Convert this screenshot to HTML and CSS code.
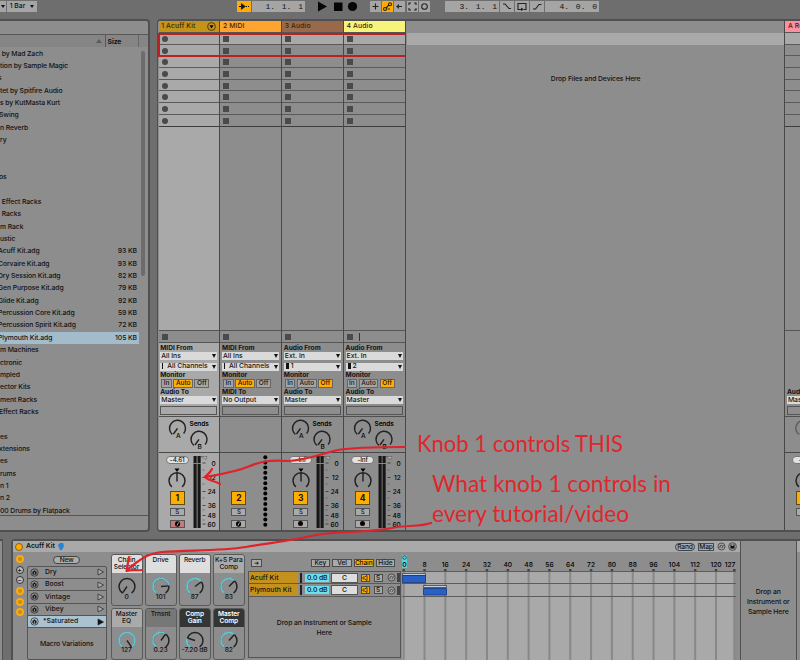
FILE: index.html
```
<!DOCTYPE html>
<html lang="en">
<head>
<meta charset="utf-8">
<title>Acuff Kit</title>
<link rel="stylesheet" href="styles.css">
</head>
<body>
<header class="bar">
  <div class="cell quant-prev"><i class="caret"></i></div>
  <div class="cell quant">1 Bar <i class="caret"></i></div>
  <div class="cell follow on"><svg width="14" height="11"><path d="M2 5.5h4M9 5.5h1M11 5.5h1" stroke="#111"/><path d="M4.500 3L8 5.500 4.500 8z" fill="#111"/></svg></div>
  <div class="cell pos">1.&nbsp; 1.&nbsp; 1</div>
  <svg class="transport" width="42" height="13"><path d="M1 1.500L10 6.500 1 11.500z"/><path d="M17 2.500h8.500v8.500h-8.500z"/><circle cx="35.500" cy="6.500" r="4.600"/></svg>
  <div class="tools">
    <div class="cell"><svg width="11" height="11"><path d="M2.500 5.500h6M5.500 2.500v6"/></svg></div>
    <div class="cell on"><svg width="11" height="11"><circle cx="3" cy="8" r="1.500"/><circle cx="8" cy="3.200" r="1.500"/><path d="M4 7L7 4M5.500 8h2.500"/></svg></div>
    <div class="cell"><svg width="11" height="11"><path d="M3 5.500h5M5 3.700L3 5.500l2 1.800"/></svg></div>
    <div class="cell"><svg width="11" height="11"><path d="M2 4V2h2M7 2h2v2M9 7v2H7M4 9H2V7"/></svg></div>
    <div class="cell"><svg width="11" height="11"><circle cx="5.500" cy="5.500" r="2.800"/></svg></div>
  </div>
  <div class="tools loop">
    <div class="cell num">3.&nbsp; 1.&nbsp; 1</div>
    <div class="cell w14"><svg width="14" height="11"><path d="M3 3h2l4 4.500h2"/></svg></div>
    <div class="cell w14"><svg width="14" height="11"><path d="M6 8.500H3v-6h8v6H9"/><path d="M6 6.500L9 8.500 6 10z" fill="#222" stroke="none"/></svg></div>
    <div class="cell w14"><svg width="14" height="11"><path d="M3 8h2.500L9 3.500h2.500"/></svg></div>
    <div class="cell num">4.&nbsp; 0.&nbsp; 0</div>
  </div>
</header>

<div class="upper">
  <aside class="browser">
    <div class="search"></div>
    <div class="cols"><span class="name"><i class="sort"></i></span><span class="size">Size</span></div>
    <div class="files"><div class="list" id="files"></div><div class="scroll"></div></div>
    <div class="foot"></div>
  </aside>
  <main class="session">
    <div class="tracks" id="tracks"></div>
    <div class="drop"><div class="hl"></div><p>Drop Files and Devices Here</p></div>
    <div class="return" id="return"></div>
    <div class="selection"></div>
  </main>
</div>

<footer class="lower">
  <div class="stub"></div>
  <section class="device">
    <div class="title"><i class="led"></i><b>Acuff Kit</b><svg width="8" height="9"><path d="M1 3l2-2 3 0 1 3-2 4H3z" fill="#2583d8"/></svg>
      <span class="pill rand">Rand</span><span class="btn map">Map</span>
      <svg width="9" height="9"><circle cx="4.500" cy="4.500" r="3.500" fill="#aaa" stroke="#333" stroke-width=".8"/><path d="M3 6V4l2-1M6 3v2L4.500 6" fill="none" stroke="#222" stroke-width=".8"/></svg>
      <svg width="9" height="9"><circle cx="4.500" cy="4.500" r="3.900" fill="#999" stroke="#444" stroke-width=".8"/><path d="M2.500 2.500h4v4h-4z" fill="#111"/><path d="M3.500 2.500h2v1.200h-2z" fill="#ddd"/></svg>
    </div>
    <div class="inner">
      <div class="side">
        <i class="o"></i><i class="g">+</i><i class="g">−</i><i class="o"></i><i class="o"></i><i class="o"></i>
      </div>
      <div class="vars">
        <span class="pill new">New</span>
        <div class="vlist"><div id="vars"></div><p>Macro Variations</p></div>
      </div>
      <div class="macros" id="macros"></div>
      <div class="chains">
        <div class="chead"><span class="btn go">➜</span><span class="btn">Key</span><span class="btn">Vel</span><span class="btn on">Chain</span><span class="btn">Hide</span></div>
        <div class="clist"><div id="chains"></div><p>Drop an Instrument or Sample<br>Here</p></div>
      </div>
      <svg class="zones" id="zones" width="336" height="108" viewBox="401 552 336 108"></svg>
    </div>
  </section>
  <div class="dropdev">Drop an<br>Instrument or<br>Sample Here</div>
  <div class="next"></div>
</footer>

<svg class="notes" width="800" height="660">
  <path d="M405 447C380 447 355 447 338 450C320 454 308 460 288 461C270 460 262 461 250 466C236 472 222 474 205 477"/>
  <path d="M212 469C210 473 207 475 205 477C209 481 215 481 220 484"/>
  <path d="M431 523C420 527 405 525 392 528C365 533 340 531 316 535C290 541 270 543 246 547C220 551 190 550 162 552C145 554 137 562 127 570"/>
  <path d="M129 557L126.500 571C132 569 137 571 142 570"/>
  <text x="417" y="452" textLength="206" lengthAdjust="spacingAndGlyphs">Knob 1 controls THIS</text>
  <text x="432" y="491.500" textLength="239" lengthAdjust="spacingAndGlyphs">What knob 1 controls in</text>
  <text x="432" y="522" textLength="197" lengthAdjust="spacingAndGlyphs">every tutorial/video</text>
</svg>
<script src="app.js"></script>
</body>
</html>
```
FILE: styles.css
```
* { box-sizing: border-box; }
body { margin: 0; width: 800px; height: 660px; overflow: hidden; position: relative; background: #6e6e6e; color: #121212; font: 550 6.850px/1 Inter, "Open Sans", sans-serif; letter-spacing: -.1px; }
p { margin: 0; }
svg { display: block; flex: none; }
i { font-style: normal; }

/* control bar */
.bar { height: 19px; padding-top: 1px; display: flex; }
.cell { height: 11px; background: #a5a5a5; display: flex; align-items: center; justify-content: center; flex: none; }
.cell svg { fill: none; stroke: #222; stroke-width: 1.100; }
.on { background: #ffad00 !important; }
.caret { border: 2.500px solid transparent; border-top: 4px solid #111; border-bottom: 0; }
.cell .caret { border-width: 3px 2px 0; }
.quant-prev { width: 6px; }
.quant { width: 30px; margin-left: 1px; gap: 5px; letter-spacing: 0; }
.follow { width: 14px; margin-left: 200px; }
.pos { width: 53px; margin-left: 1px; justify-content: flex-end; padding-right: 2px; }
.pos, .num { font-family: "Liberation Mono", monospace; font-size: 8px; font-weight: 400; letter-spacing: 0; word-spacing: -1.400px; }
.transport { margin: -1px 0 0 12px; fill: #050505; }
.tools { display: flex; gap: 1.400px; margin-left: 10.500px; }
.tools .cell { width: 11px; }
.tools.loop { margin-left: 15px; gap: 1px; }
.tools .num { width: 54px; justify-content: flex-end; padding-right: 2px; }
.tools .w14 { width: 14px; }

/* browser */
.upper { display: flex; height: 513px; }
.browser { width: 150px; background: #8d8d8d; border: 2px solid #505050; border-left: 0; border-radius: 0 4px 4px 0; display: flex; flex-direction: column; }
.search { height: 14px; border-bottom: 1px solid #585858; }
.cols { height: 12px; background: #858585; display: flex; }
.cols .name { width: 106px; border-right: 1px solid #5a5a5a; display: flex; justify-content: flex-end; align-items: center; padding-right: 3px; }
.sort { border: 3px solid transparent; border-bottom: 4px solid #5c5c5c; border-top: 0; }
.cols .size { width: 33px; padding: 4px 0 0 1.500px; border-right: 1px solid #666; font-weight: 650; }
.files { height: 469px; display: flex; border-bottom: 1px solid #555; overflow: hidden; }
.list { width: 139px; overflow: hidden; padding-top: .800px; }
.row { height: 12.370px; display: flex; justify-content: space-between; align-items: center; padding-right: 2px; white-space: pre; }
.row.sel { background: #a3bccb; }
.scroll { width: 4px; height: 225px; margin: 4px 0 0 2px; border-radius: 2px; background: #6c6c6c; }

/* session */
.session { position: relative; width: 643px; margin-left: 7px; border: 2px solid #505050; border-right: 0; border-left-width: 1px; border-radius: 4px 0 0 4px; background: #8d8d8d; display: flex; overflow: hidden; padding-left: .700px; }
.tracks { display: flex; flex: none; }
.track { width: 61.800px; border-right: 1px solid #484848; flex: none; overflow: hidden; }
.track.active { background: #a9a9a9; }
.thead { height: 12px; padding: 0 3px 0 2.500px; display: flex; align-items: center; justify-content: space-between; border-bottom: 1px solid #555; white-space: nowrap; color: #3a2608; letter-spacing: .1px; }
.slot { height: 11.700px; border-bottom: 1px solid #5a5a5a; padding: 3px; }
.slot:nth-child(2) { background: #a9a9a9; }
.slot:nth-child(9) { border-bottom-color: #3d3d3d; }
.slot i { display: block; width: 6px; height: 6px; background: #4a4a4a; }
.active .slot i { border-radius: 50%; }
.space { height: 203.700px; }
.stop { height: 12.500px; border: 1px solid #555; border-width: 1px 0; background: #8d8d8d; padding: 2.500px 3px; display: flex; gap: 6px; }
.stop i { width: 6px; height: 6px; background: #4a4a4a; }
.stop b { width: 1px; height: 8px; margin-top: -1px; background: #333; }
.io { height: 74px; border-bottom: 1px solid #505050; padding: 1px 2px 0 1.500px; display: flex; flex-direction: column; }
.io label { height: 8.500px; line-height: 8px; font-weight: 680; font-size: 6.600px; white-space: nowrap; flex: none; letter-spacing: 0; }
.select { height: 8px; background: #dadada; margin-bottom: 2.500px; padding: 0 1px; display: flex; align-items: center; justify-content: space-between; font-size: 6.800px; white-space: nowrap; overflow: hidden; flex: none; letter-spacing: 0; }
.select span i { display: inline-block; height: 6px; width: 1px; background: #111; margin: 0 4px 0 1px; vertical-align: -1px; }
.select span i.wide { width: 3px; margin-right: 2px; }
.select + label { margin-top: -2px; }
.mon { display: flex; gap: 1.500px; height: 9px; margin: -.500px 0 0 1px; flex: none; }
.mon span { border: 1px solid #666; background: #a4a4a4; padding: 0 1.500px; font-size: 6.500px; line-height: 7.500px; letter-spacing: 0; }
.mon + label { margin-bottom: -.500px; }
.box { height: 9px; border: 1px solid #555; flex: none; margin-top: -.500px; }
.sends { height: 36px; border-bottom: 1px solid #484848; }
.sends text { font-size: 6.500px; }
.k { fill: none; stroke: #222; stroke-width: 1.450; }
.mixer { height: 77px; display: flex; }
.strip { width: 34px; padding: 3px 0 0 3px; display: flex; flex-direction: column; align-items: center; }
.gain { width: 23px; height: 8px; border: 1px solid #777; border-radius: 4px; background: #e2e2e2; text-align: center; font-size: 6.300px; line-height: 6.500px; }
.pan { height: 27.500px; }
.act { width: 15px; height: 14px; border: 1px solid #5d4a18; background: #ffad00; text-align: center; font: 700 8.500px/12.500px Inter, sans-serif; }
.mini { width: 15px; height: 8px; border: 1px solid #555; background: #aaa; text-align: center; font-size: 6px; line-height: 6.500px; margin-top: 3.300px; display: flex; justify-content: center; align-items: center; flex: none; }
.mini.arm { background: #c67a7a; }
.mini i { width: 5px; height: 5px; border-radius: 50%; background: #050505; }
.midi .strip { padding-top: 38.500px; }
.meter text { font-size: 6.500px; text-anchor: end; letter-spacing: 0; }
.drop { width: 379.500px; flex: none; border-right: 1px solid #484848; text-align: center; padding-left: 1px; }
.hl { margin-top: 12px; height: 11.500px; background: #a9a9a9; }
.drop p { margin-top: 31.500px; }
.return { width: 20px; flex: none; overflow: hidden; }
.return .track { border: 0; width: 61px; }
.selection { position: absolute; z-index: 2; left: 0; top: 12px; width: 247px; height: 24px; border: 2px solid #b92222; border-right: 0; }

/* device area */
.lower { display: flex; height: 121px; margin-top: 7px; align-items: stretch; }
.stub { width: 3px; background: #8d8d8d; border: 2px solid #505050; border-width: 2px 1px 0 0; margin-right: 8px; }
.device { width: 730px; border: 2px solid #505050; border-width: 2px 1px 0 2px; border-radius: 4px 0 0 0; background: #8d8d8d; display: flex; flex-direction: column; flex: none; }
.title { height: 11px; background: #a9a9a9; display: flex; align-items: center; padding: 0 3px 0 2px; }
.title b { font-weight: 600; margin: 0 2px 0 3px; letter-spacing: 0; }
.led { width: 8px; height: 8px; border-radius: 50%; background: #ffad00; border: 1px solid #85610f; }
.pill { border: 1px solid #444; border-radius: 5px; background: #acacac; height: 8px; line-height: 6.500px; text-align: center; font-size: 6.600px; }
.rand { width: 20px; margin-left: auto; }
.btn { border: 1px solid #4c4c4c; background: #aaa; height: 8px; line-height: 6.500px; text-align: center; font-size: 6.600px; }
.map { width: 16px; margin: 0 3px; }
.title svg:last-child { margin-left: 2px; }
.inner { display: flex; height: 108px; }
.side { width: 14px; padding: 3px 0 0 2.500px; display: flex; flex-direction: column; gap: 2.700px; }
.side i { width: 8px; height: 8px; border-radius: 50%; text-align: center; line-height: 6px; flex: none; }
.side .o { background: #c98a17; border: 2px solid #fbac0c; }
.side .g { background: #bbb; border: 1px solid #333; }
.vars { width: 79.500px; display: flex; flex-direction: column; align-items: center; padding-top: 3.500px; }
.new { width: 27px; }
.vlist { width: 79.500px; height: 94px; margin-top: 2px; border: 1px solid #555; border-radius: 2px; letter-spacing: 0; }
.var { height: 12.400px; border-bottom: 1px solid #555; display: flex; align-items: center; padding: 0 2px; gap: 6px; }
.var:last-child { background: #abc3d1; gap: 4px; }
.var svg:last-child { margin-left: auto; }
.vlist p { text-align: center; margin-top: 13px; letter-spacing: -.1px; }
.macros { width: 141px; padding: 2px 0 0 4px; display: grid; grid-template-columns: repeat(4, 32px); grid-auto-rows: 52px; gap: 1.500px 2.100px; flex: none; }
.macro { border: 1px solid #5a5a5a; border-radius: 3px; overflow: hidden; text-align: center; }
.macro h4 { margin: 0; height: 18px; font-weight: 550; font-size: 6.600px; line-height: 7.200px; padding-top: 2px; white-space: nowrap; }
.macro svg { margin: 4px auto 0; }
.macro div { margin: -.500px -4px 0; white-space: nowrap; font-size: 6.700px; }
.white h4 { background: #dedede; }
.light h4 { background: #aaa; }
.gray h4 { background: #777; }
.dark h4 { background: #353535; color: #fff; font-weight: 600; }
.chains { width: 153.500px; flex: none; }
.chead { height: 19px; padding: 7px 0 0 3px; display: flex; gap: 2px; }
.chead .btn { width: 19.700px; }
.chead .go { width: 11px; margin-right: 47px; font-size: 6px; }
.clist { height: 87px; border: 1px solid #555; }
.chain { height: 12.400px; border-bottom: 1px solid #5a5a5a; display: flex; align-items: center; }
.chain b { width: 50px; height: 11.400px; line-height: 11.400px; padding-left: 1.500px; background: #c4921c; font-weight: 550; letter-spacing: 0; }
.chain u { width: 2px; height: 10px; background: #222; margin: 0 2.800px 0 2.300px; }
.db { width: 24.500px; height: 8px; background: #69e1ee; line-height: 8px; text-align: center; }
.note { width: 24.500px; height: 8px; background: #ddd; line-height: 8px; text-align: center; margin: 0 4px 0 3px; outline: .5px solid #555; }
.chain .btn { width: 9px; margin-right: 4px; padding: 0; }
.chain em { width: 3.500px; height: 9px; background: #444; margin-left: 1px; }
.clist p { text-align: center; line-height: 10px; margin-top: 21px; }
.zones text { font-size: 6.700px; text-anchor: middle; letter-spacing: 0; }
.dropdev { width: 55.500px; flex: none; border: 0 solid #505050; border-width: 2px 1px 0 0; background: #8d8d8d; text-align: center; line-height: 9.900px; padding-top: 46px; }
.next { flex: 1; border-top: 2px solid #505050; background: linear-gradient(#a9a9a9 11px, #8d8d8d 11px); }

/* annotations */
.notes { position: absolute; left: 0; top: 0; z-index: 3; }
.notes path { fill: none; stroke: #e0222a; stroke-width: 2.200; stroke-linecap: round; stroke-linejoin: round; }
.notes text { fill: #e0262c; font: 400 23px Lato, sans-serif; letter-spacing: 0; }
```
FILE: app.js
```
const $ = id => document.getElementById(id);

const files = [' by Mad Zach', 'tion by Sample Magic', 's', 'tet by Spitfire Audio', 's by KutMasta Kurt', 'Swing', 'n Reverb', 'ry', '', '', 'os', '',
  ' Effect Racks', ' Racks', 'm Rack', 'ustic', ['Acuff Kit.adg', 93], ['Corvaire Kit.adg', 93], ['Dry Session Kit.adg', 82],
  ['Gen Purpose Kit.adg', 79], ['Glide Kit.adg', 92], ['Percussion Core Kit.adg', 59], ['Percussion Spirit Kit.adg', 72], ['Plymouth Kit.adg', 105],
  'm Machines', 'ctronic', 'mpled', 'ector Kits', 'ment Racks', 'Effect Racks', '', 'es', 'xtensions', 'es', 'rums', 'n 1', 'n 2', '00 Drums by Flatpack'];
const shift = { 2: -2, 5: -1, 10: -1, 16: -2, 17: -2, 18: -2, 19: -2, 20: -2, 21: -2, 22: -2, 23: -2, 29: -1, 32: -1 };
$('files').innerHTML = files.map((f, i) => {
  const [name, kb] = Array.isArray(f) ? f : [f];
  return `<div class="row${kb === 105 ? ' sel' : ''}"><span style="margin-left:${shift[i] || 0}px">${name}</span><span>${kb ? kb + ' KB' : ''}</span></div>`;
}).join('');

const point = (cx, cy, r, deg) => {
  const a = (deg - 90) * Math.PI / 180;
  return `${(cx + r * Math.cos(a)).toFixed(2)} ${(cy + r * Math.sin(a)).toFixed(2)}`;
};
const arc = (cx, cy, r, from, to) => `M${point(cx, cy, r, from)}A${r} ${r} 0 ${to - from > 180 ? 1 : 0} 1 ${point(cx, cy, r, to)}`;

const sendKnob = (x, y, letter) => `<path class="k" d="${arc(x, y, 8, -140, 130)}M${x} ${y}L${point(x, y, 7, -145)}"/><text x="${x - 1.5}" y="${y + 9.5}">${letter}</text>`;
const sends = `<svg width="60" height="35">${sendKnob(18.5, 11.3, 'A')}${sendKnob(40, 22.3, 'B')}<text x="30.500" y="9.300" font-weight="600">Sends</text></svg>`;
const pan = `<svg class="pan" width="22" height="27.500"><path class="k" d="${arc(11, 16.7, 8, -140, 140)}M11 9.500v8"/><path d="M8.500 4.500h5L11 8z"/></svg>`;
const scale = [[0, 10], [12, 24.5], [24, 38.5], [36, 52.5], [48, 62.5], [60, 71]];
const meter = `<svg class="meter" width="26" height="77"><path d="M.5 3h3.200v72h-3.200zM4.500 3h3.200v72h-3.200z" fill="#171717"/><path d="M0 10.500h8" stroke="#888"/><path d="M8 3.500h6l-1 3z" fill="#bbb" stroke="#444" stroke-width=".5"/>${
  scale.map(([n, y]) => `<path d="M9.500 ${y}h3" stroke="#333" stroke-width=".8"/><text x="22.800" y="${y + 2.5}">${n}</text>`).join('')}${
  [17, 31, 45, 57, 67].map(y => `<path d="M9.500 ${y}h2" stroke="#444" stroke-width=".6"/>`).join('')}</svg>`;
const dots = `<svg width="25" height="77">${Array.from({ length: 14 }, (_, i) => `<circle cx="11.300" cy="${4.2 + i * 5.2}" r="2"/>`).join('')}</svg>`;
const select = (v, mark) => `<div class="select"><span>${mark ? `<i class="${mark}"></i>` : ''}${v}</span><i class="caret"></i></div>`;

const tracks = [
  { n: 1, name: 'Acuff Kit', color: '#c4931c', kind: 'MIDI', src: 'All Ins', ch: 'All Channels', mark: 'thin', mon: 'Auto', to: 'Audio To', out: 'Master', gain: '-4.61' },
  { n: 2, name: 'MIDI', color: '#ffa52f', kind: 'MIDI', src: 'All Ins', ch: 'All Channels', mark: 'thin', mon: 'Auto', to: 'MIDI To', out: 'No Output' },
  { n: 3, name: 'Audio', color: '#98694a', kind: 'Audio', src: 'Ext. In', ch: '1', mark: 'wide', mon: 'Off', to: 'Audio To', out: 'Master', gain: '-Inf' },
  { n: 4, name: 'Audio', color: '#f7f47c', kind: 'Audio', src: 'Ext. In', ch: '2', mark: 'wide', mon: 'Off', to: 'Audio To', out: 'Master', gain: '-Inf' }
];
const note = '<svg width="7" height="6"><ellipse cx="3.500" cy="3" rx="2.500" ry="2.800"/><path d="M3 4.500L4.500 1.500" stroke="#ddd" stroke-width=".8"/></svg>';
$('tracks').innerHTML = tracks.map(t => `
<div class="track${t.n === 1 ? ' active' : ''}${t.gain ? '' : ' midi'}">
  <div class="thead" style="background:${t.color}"><span>${t.n} ${t.name}</span>${t.n === 1 ? '<svg width="9" height="9"><circle cx="4.500" cy="4.500" r="3.900" fill="none" stroke="#3a2608" stroke-width=".8"/><path d="M2.500 3.200h4L4.500 6.500z"/></svg>' : ''}</div>
  ${'<div class="slot"><i></i></div>'.repeat(8)}
  <div class="space"></div>
  <div class="stop"><i></i>${t.n === 4 ? '<b></b>' : ''}</div>
  <div class="io"><label>${t.kind} From</label>${select(t.src)}${select(t.ch, t.mark)}
    <label>Monitor</label><div class="mon">${['In', 'Auto', 'Off'].map(m => `<span${m === t.mon ? ' class="on"' : ''}>${m}</span>`).join('')}</div>
    <label>${t.to}</label>${select(t.out)}<div class="box"></div></div>
  <div class="sends">${t.gain ? sends : ''}</div>
  <div class="mixer"><div class="strip">${t.gain ? `<div class="gain">${t.gain}</div>${pan}` : ''}
    <div class="act">${t.n}</div><div class="mini">S</div><div class="mini${t.n === 1 ? ' arm' : ''}">${t.n < 3 ? note : '<i></i>'}</div></div>${t.gain ? meter : dots}</div>
</div>`).join('');

$('return').innerHTML = `<div class="track">
  <div class="thead" style="background:#ff8fa0"><span>A Reverb</span></div>
  ${'<div class="slot"></div>'.repeat(8)}<div class="space"></div><div class="stop" style="border-bottom-color:transparent"></div>
  <div class="io"><div style="height:44px"></div><label>Audio To</label>${select('Master')}<div class="box"></div></div>
  <div class="sends"><svg width="60" height="35" opacity=".45">${sendKnob(18.8, 11.3, 'A')}</svg></div>
  <div class="mixer"><div class="strip"><div class="gain">-Inf</div>${pan}<div class="act">A</div><div class="mini">S</div></div></div></div>`;

$('vars').innerHTML = ['Dry', 'Boost', 'Vintage', 'Vibey', '*Saturated'].map((v, i) => `
<div class="var"><svg width="9" height="9"><circle cx="4.500" cy="4.500" r="3.700" fill="none" stroke="#333" stroke-width=".8"/><path d="M2.500 3.500h1l.5-1h1l.5 1h1v3h-4z" fill="#111"/><circle cx="4.500" cy="5" r=".7" fill="#ccc"/></svg><span>${v}</span>
<svg width="7" height="8"><path d="M1 1L6.500 4 1 7z" fill="${i === 4 ? '#111' : '#aaa'}" stroke="#222" stroke-width=".7"/></svg></div>`).join('');

const macros = [['Chain<br>Selector', 0, '0', 'white'], ['Drive', 101, '101', 'white'], ['Reverb', 87, '87', 'white'], ['K+S Para<br>Comp', 83, '83', 'light'],
  ['Master<br>EQ', 127, '127', 'light'], ['Trnsnt', 79, '0.23', 'gray'], ['Comp<br>Gain', 32, '-7.20 dB', 'dark'], ['Master<br>Comp', 82, '82', 'dark']];
$('macros').innerHTML = macros.map(([name, v, label, tone]) => {
  const a = -145 + v / 127 * 290;
  return `<div class="macro ${tone}"><h4>${name}</h4><svg width="20" height="17"><path class="k" d="${arc(10, 9.5, 8, -145, 145)}"/>${
    v ? `<path class="k" style="stroke:#62c6d6;stroke-width:1.8" d="${arc(10, 9.5, 8, -145, a)}"/>` : ''}<path class="k" d="M10 9.500L${point(10, 9.5, 8, a)}"/></svg><div>${label}</div></div>`;
}).join('');

$('chains').innerHTML = ['Acuff Kit', 'Plymouth Kit'].map(n => `
<div class="chain"><b>${n}</b><u></u><span class="db">0.0 dB</span><span class="note">C</span>
<span class="btn on"><svg width="7" height="6"><path d="M1 2h1.500L5 .5v5L2.500 4H1z" fill="none" stroke="#222" stroke-width=".8"/></svg></span><span class="btn">S</span>
<svg width="9" height="9"><circle cx="4.500" cy="4.500" r="3.500" fill="#aaa" stroke="#333" stroke-width=".8"/><path d="M3 6V4l2-1M6 3v2L4.500 6" fill="none" stroke="#222" stroke-width=".7"/></svg><em></em></div>`).join('');

const ticks = Array.from({ length: 16 }, (_, i) => [i * 8, 403.7 + i * 20.82]).concat([[127, 734.3]]);
$('zones').innerHTML = `<path d="M402 571.500h332V660h-332z" fill="#a9a9a9"/>` +
  ticks.map(([n, x]) => `<path d="M${x} 571v89" stroke="#888" stroke-width="2"/><path d="M${x} 569v3" stroke="#444" stroke-width="2.500"/>${n ? `<text x="${n === 127 ? 730 : x}" y="566.500">${n}</text>` : ''}`).join('') +
  `<path d="M402 571.500h334M402 583.500h334M402 596.500h334" stroke="#5c5c5c"/>
  <path d="M402 555h5v13h-5z" fill="#5bd3df"/><circle cx="404.500" cy="557.500" r="1.800" fill="none" stroke="#222" stroke-width=".7"/><text x="404.500" y="566.500">0</text>
  <path d="M402.500 573.500h23v2h-23zM423.500 585.500h23v2h-23z" fill="#c0d0e4" stroke="#333" stroke-width=".7"/>
  <path d="M402.500 575.500h23v7h-23zM423.500 588.500h23v6.500h-23z" fill="#2860c8" stroke="#173573" stroke-width=".8"/>`;
```
